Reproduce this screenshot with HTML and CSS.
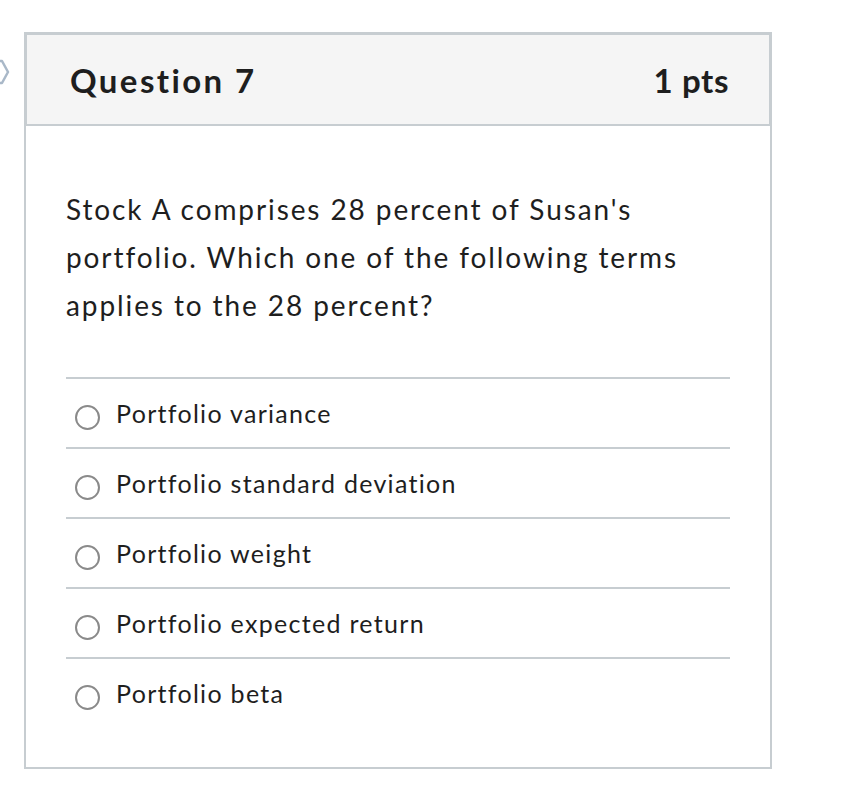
FILE: index.html
```html
<!DOCTYPE html>
<html>
<head>
<meta charset="utf-8">
<link rel="stylesheet" href="styles.css">
</head>
<body>
<svg class="side-arrow" width="10" height="26" viewBox="0 0 10 26"><path d="M-4 2 L2 2 L8 13 L2 24 L-4 24" fill="none" stroke="#a9b8c8" stroke-width="2.5" stroke-linejoin="round"/></svg>
<div class="card">
  <div class="card-header">
    <span class="title">Question 7</span>
    <span class="pts">1 pts</span>
  </div>
  <div class="card-body">
    <p class="question">Stock A comprises 28 percent of Susan's portfolio. Which one of the following terms applies to the 28 percent?</p>
    <div class="answers">
      <div class="answer"><span class="radio"></span><span class="label">Portfolio variance</span></div>
      <div class="answer"><span class="radio"></span><span class="label">Portfolio standard deviation</span></div>
      <div class="answer"><span class="radio"></span><span class="label">Portfolio weight</span></div>
      <div class="answer"><span class="radio"></span><span class="label">Portfolio expected return</span></div>
      <div class="answer"><span class="radio"></span><span class="label">Portfolio beta</span></div>
    </div>
  </div>
</div>
</body>
</html>
```
FILE: styles.css
```css
html, body {
  margin: 0;
  padding: 0;
  background: #ffffff;
}
body {
  font-family: Lato, "Liberation Sans", sans-serif;
  color: #1e1e1e;
  padding: 32px 0 0 24px;
  position: relative;
}
.side-arrow {
  position: absolute;
  left: 0;
  top: 59px;
}
.card {
  width: 744px;
  border: 2px solid #c7cdd1;
  background: #fff;
}
.card-header {
  display: flex;
  justify-content: space-between;
  align-items: center;
  height: 89px;
  background: #f5f5f5;
  border: 1px solid #c7cdd1;
  border-width: 1px 1px 2px 1px;
  padding: 0 41px 0 43px;
}
.title {
  font-size: 33px;
  font-weight: 700;
  letter-spacing: 2.4px;
}
.pts {
  font-size: 33px;
  font-weight: 700;
  letter-spacing: 0.6px;
  margin-right: -1px;
}
.card-body {
  padding: 59px 40px 40px 40px;
}
.question {
  margin: 0;
  font-size: 28px;
  line-height: 48px;
  letter-spacing: 1.9px;
  width: 640px;
}
.answers {
  margin-top: 48px;
}
.answer {
  display: flex;
  align-items: center;
  height: 68px;
  border-top: 2px solid #c7cdd1;
}
.radio {
  width: 25px;
  height: 25px;
  border: 2px solid #8a8a8a;
  border-radius: 50%;
  margin: 8px 16px 0 9px;
  box-sizing: border-box;
}
.label {
  font-size: 25px;
  letter-spacing: 1.3px;
}
```
